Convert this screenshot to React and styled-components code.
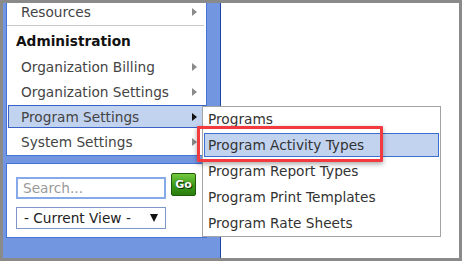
import styled, { createGlobalStyle } from 'styled-components';

const GlobalStyle = createGlobalStyle`
  html, body { margin: 0; padding: 0; background: #ffffff; }
  body { font-family: "DejaVu Sans", Verdana, sans-serif; }
  * { box-sizing: border-box; }
`;

const mainItems = [
    { title: 'Organization Billing' },
    { title: 'Organization Settings' },
    { title: 'Program Settings', active: true },
    { title: 'System Settings' },
];

const subItems = [
    { title: 'Programs' },
    { title: 'Program Activity Types', active: true },
    { title: 'Program Report Types' },
    { title: 'Program Print Templates' },
    { title: 'Program Rate Sheets' },
];

const Frame = styled.div`
  position: relative;
  width: 462px;
  height: 261px;
  border: 3px solid #8a8a8a;
  background: #ffffff;
  overflow: hidden;
  display: flex;
  font-size: 13.7px;
`;

const Sidebar = styled.div`
  width: 218px;
  height: 100%;
  background: #7396e0;
  border-right: 1px solid #1f45a6;
  padding-left: 3px;
  display: flex;
  flex-direction: column;
`;

const Panel = styled.div`
  width: 201px;
  background: #ffffff;
  border: 1px solid #4574d8;
`;

const MenuPanel = styled(Panel)`
  margin-top: -3px;
  border-top: none;
  height: 156px;
`;

const SearchPanel = styled(Panel)`
  margin-top: 7px;
  height: 75px;
  padding: 13px 0 0 9px;
  display: flex;
  flex-direction: column;
  gap: 8px;
`;

const Row = styled.div`
  height: ${({ $h }) => $h || 23}px;
  margin: 0 0 ${({ $mb }) => ($mb === undefined ? 2 : $mb)}px 1px;
  width: 198px;
  display: flex;
  align-items: center;
  justify-content: space-between;
  padding: 0 8px 0 12px;
  color: #444444;
  border: 1px solid ${({ $active }) => ($active ? '#3a62c6' : 'transparent')};
  background: ${({ $active }) => ($active ? '#c2d3f0' : 'transparent')};
`;

const Arrow = styled.span`
  width: 0;
  height: 0;
  border-top: 4.5px solid transparent;
  border-bottom: 4.5px solid transparent;
  border-left: 5px solid ${({ $active }) => ($active ? '#111111' : '#8a8a8a')};
`;

const Separator = styled.div`
  height: 1px;
  margin: 1px 2px 0 0;
  background: #c8c8c8;
`;

const Header = styled.div`
  height: 29px;
  line-height: 30px;
  padding-left: 9px;
  font-weight: bold;
  color: #111111;
`;

const SearchLine = styled.div`
  display: flex;
  align-items: flex-start;
  gap: 5px;
`;

const SearchInput = styled.input`
  width: 150px;
  height: 22px;
  margin: 0;
  border: 2px solid #86a9ea;
  padding: 0 5px;
  font-family: "DejaVu Sans", Verdana, sans-serif;
  font-size: 13.7px;
  color: #333333;
  outline: none;
  &::placeholder { color: #9a9a9a; }
`;

const GoButton = styled.button`
  width: 25px;
  height: 23px;
  margin-top: -4px;
  padding: 0;
  border: 1px solid #1f5c0a;
  border-radius: 2px;
  background: linear-gradient(#74c93e, #3b9a18 55%, #2b7d0e);
  color: #ffffff;
  font-family: "DejaVu Sans", Verdana, sans-serif;
  font-size: 11px;
  font-weight: bold;
  text-shadow: 0 0 1px #0c3300, 1px 1px 0 #0c3300;
`;

const ViewSelect = styled.div`
  width: 150px;
  height: 22px;
  border: 1px solid #7d98c6;
  display: flex;
  align-items: center;
  justify-content: space-between;
  padding: 0 7px 0 7px;
  color: #222222;
`;

const SelectArrow = styled.span`
  width: 0;
  height: 0;
  border-left: 4px solid transparent;
  border-right: 4px solid transparent;
  border-top: 8px solid #111111;
`;

const SubMenu = styled.div`
  position: absolute;
  left: 199px;
  top: 103px;
  width: 239px;
  height: 131px;
  background: #ffffff;
  border: 1px solid #a3a3a3;
  padding: 0 1px;
`;

const SubRow = styled.div`
  height: 24px;
  margin-bottom: 2px;
  padding-left: 3px;
  display: flex;
  align-items: center;
  color: #333333;
  border: 1px solid ${({ $active }) => ($active ? '#3a6fd0' : 'transparent')};
  background: ${({ $active }) => ($active ? '#c2d3f0' : 'transparent')};
`;

const Callout = styled.div`
  position: absolute;
  left: 194px;
  top: 123px;
  width: 186px;
  height: 36px;
  border: 3px solid #f23a3f;
  border-radius: 1px;
  box-shadow: 0 2px 5px rgba(0, 0, 0, 0.35);
  pointer-events: none;
`;

const App = () => {
    return (
        <>
            <GlobalStyle />
            <Frame>
                <Sidebar>
                    <MenuPanel>
                        <Row $h={24} $mb={0}>
                            <span>Resources</span>
                            <Arrow />
                        </Row>
                        <Separator />
                        <Header>Administration</Header>
                        {mainItems.map(item => (
                            <Row key={item.title} $active={item.active}>
                                <span>{item.title}</span>
                                <Arrow $active={item.active} />
                            </Row>
                        ))}
                    </MenuPanel>
                    <SearchPanel>
                        <SearchLine>
                            <SearchInput placeholder="Search..." />
                            <GoButton>Go</GoButton>
                        </SearchLine>
                        <ViewSelect>
                            <span>- Current View -</span>
                            <SelectArrow />
                        </ViewSelect>
                    </SearchPanel>
                </Sidebar>
                <SubMenu>
                    {subItems.map(item => (
                        <SubRow key={item.title} $active={item.active}>
                            {item.title}
                        </SubRow>
                    ))}
                </SubMenu>
                <Callout />
            </Frame>
        </>
    );
};

export default App;
